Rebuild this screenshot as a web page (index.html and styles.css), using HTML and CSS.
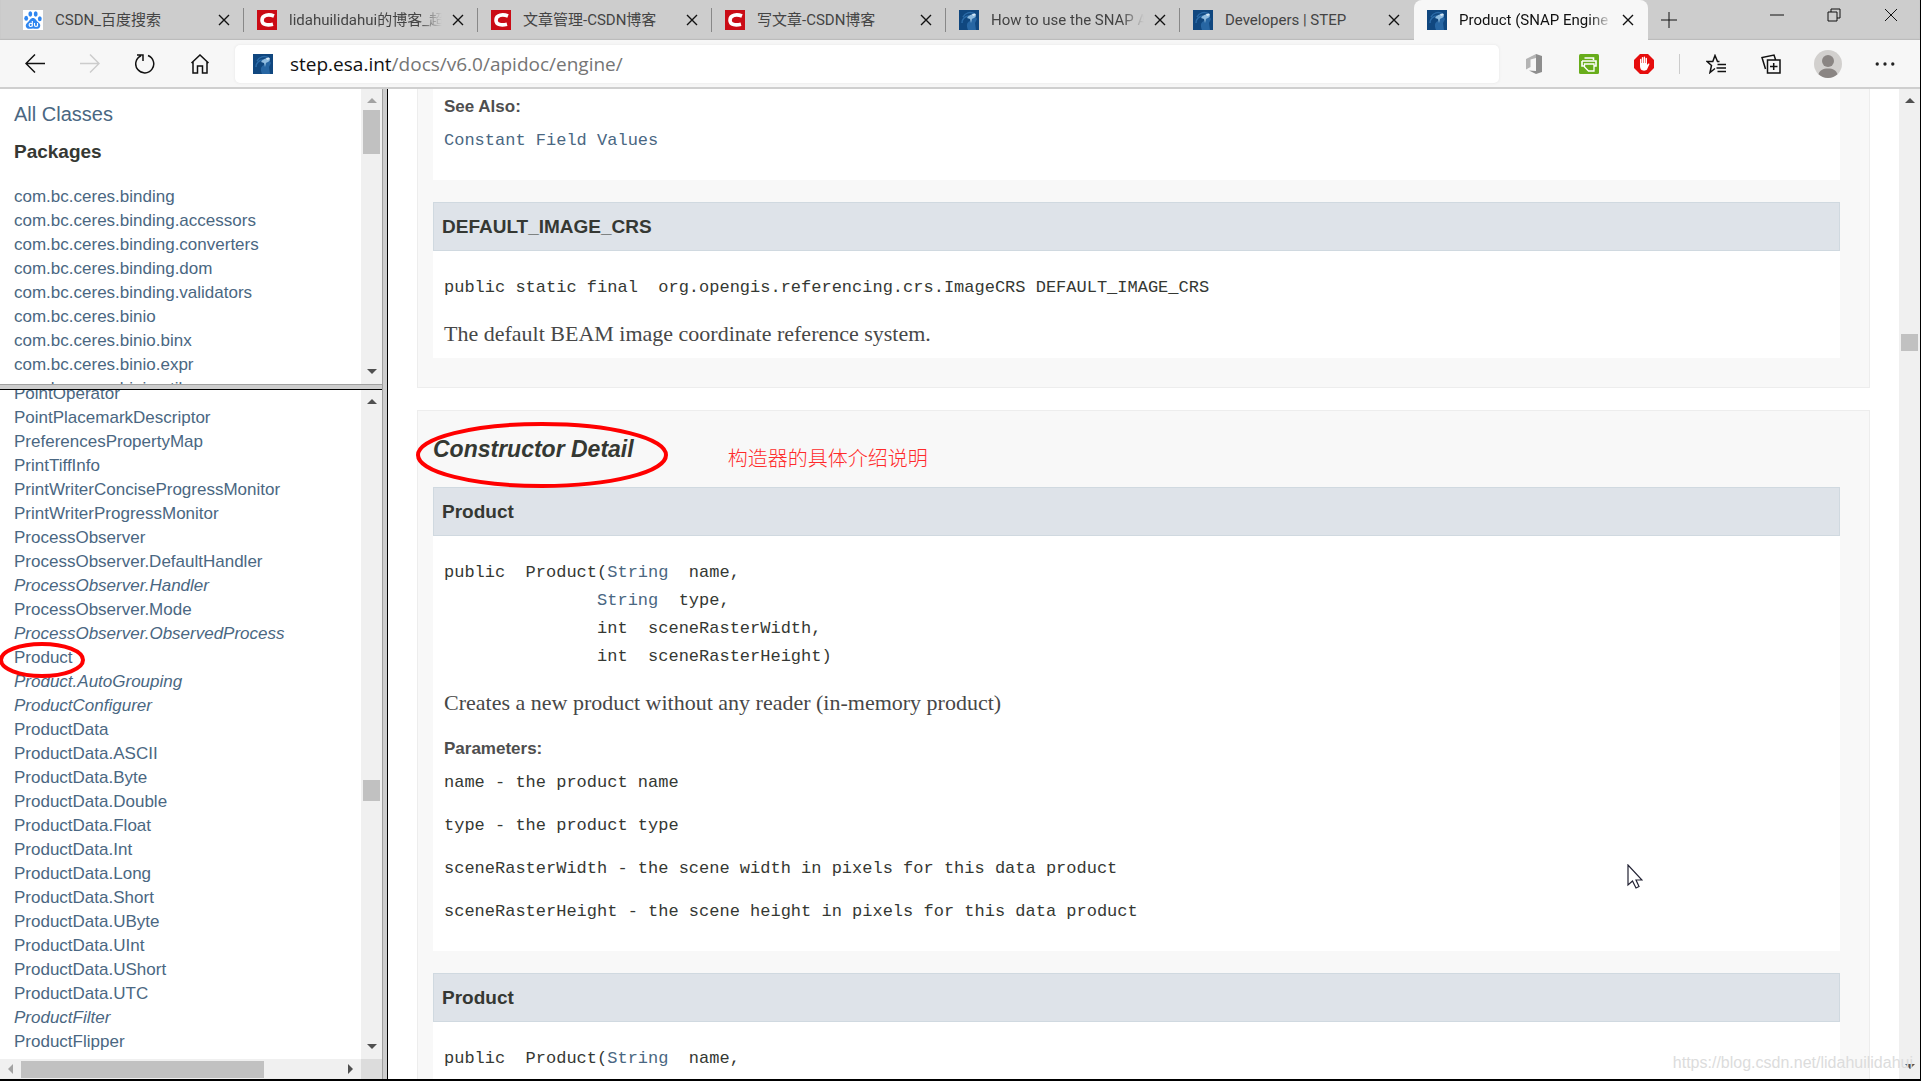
FILE: index.html
```html
<!DOCTYPE html>
<html lang="en">
<head>
    <meta charset="UTF-8">
    <meta name="viewport" content="width=device-width, initial-scale=1.0">
    <title>Product (SNAP Engine API)</title>
    <link rel="stylesheet" href="styles.css">
</head>
<body>

    <!-- shared icons -->
    <svg class="sprite" aria-hidden="true">
        <symbol id="close" viewBox="0 0 12 12"><path d="M1 1l10 10M11 1L1 11" fill="none" stroke="currentColor" stroke-width="1.4"/></symbol>
        <symbol id="baidu" viewBox="0 0 20 20">
            <rect width="20" height="20" fill="#fff"/>
            <g fill="#2f86f0">
                <ellipse cx="7.300" cy="4" rx="1.900" ry="2.700"/>
                <ellipse cx="12.700" cy="4" rx="1.900" ry="2.700"/>
                <ellipse cx="3.200" cy="8.200" rx="1.900" ry="2.500"/>
                <ellipse cx="16.800" cy="8.700" rx="1.900" ry="2.500"/>
                <path d="M10 8c2.500 0 3 2.500 5 4s2.800 3 2 5c-.8 1.800-3 2-7 1.600C6 19 3.800 18.800 3 17c-.8-2 .3-3.500 2-5s2.500-4 5-4z"/>
            </g>
            <path d="M9.300 11v5.500M9.300 14.500a1.600 1.600 0 1 0-.1 1M11.500 13v2.200c0 1.600 3 1.600 3 0V13v3.500" fill="none" stroke="#fff" stroke-width="1.100"/>
        </symbol>
        <symbol id="csdn" viewBox="0 0 20 20">
            <rect width="20" height="20" fill="#ca0c16"/>
            <path d="M17 6c-5-2-12-1.500-12 4.200 0 5 6 5.300 11 4" fill="none" stroke="#fff" stroke-width="3.600"/>
        </symbol>
        <symbol id="step" viewBox="0 0 20 20">
            <rect width="20" height="20" fill="#10477f"/>
            <path d="M9 20c-2-5-1-8 2-9l5-5 2 3-2 4 1 7z" fill="#2766a3"/>
            <path d="M4 7c2-4 7-6 12-3M3 13c0-4 3-7 7-7" fill="none" stroke="#2b6ba8" stroke-width="1.500"/>
            <path d="M8 8c2-3 4-4 8-4l1 2c-1 2-3 2-4 3l-1 4-1-4z" fill="#8fbce0"/>
            <path d="M13 4l3-.5 1 1.500-3 1z" fill="#d6e8f5"/>
        </symbol>
    </svg>

    <div class="browser">
        <div class="tabs">
            <div class="tab"><svg class="favicon"><use href="#baidu"/></svg><span class="title">CSDN_百度搜索</span><button aria-label="Close tab"><svg><use href="#close"/></svg></button></div>
            <div class="tab"><svg class="favicon"><use href="#csdn"/></svg><span class="title fade">lidahuilidahui的博客_超</span><button aria-label="Close tab"><svg><use href="#close"/></svg></button></div>
            <div class="tab"><svg class="favicon"><use href="#csdn"/></svg><span class="title">文章管理-CSDN博客</span><button aria-label="Close tab"><svg><use href="#close"/></svg></button></div>
            <div class="tab"><svg class="favicon"><use href="#csdn"/></svg><span class="title">写文章-CSDN博客</span><button aria-label="Close tab"><svg><use href="#close"/></svg></button></div>
            <div class="tab"><svg class="favicon"><use href="#step"/></svg><span class="title fade">How to use the SNAP A</span><button aria-label="Close tab"><svg><use href="#close"/></svg></button></div>
            <div class="tab"><svg class="favicon"><use href="#step"/></svg><span class="title">Developers | STEP</span><button aria-label="Close tab"><svg><use href="#close"/></svg></button></div>
            <div class="tab active"><svg class="favicon"><use href="#step"/></svg><span class="title fade">Product (SNAP Engine</span><button aria-label="Close tab"><svg><use href="#close"/></svg></button></div>
            <button class="new-tab" aria-label="New tab"><svg viewBox="0 0 16 16"><path d="M8 0v16M0 8h16"/></svg></button>
            <div class="window-buttons">
                <button aria-label="Minimize"><svg viewBox="0 0 14 14"><path d="M0 7h14"/></svg></button>
                <button aria-label="Restore"><svg viewBox="0 0 14 14"><path d="M1 4h9v9H1zM4 4V1h9v9h-3"/></svg></button>
                <button aria-label="Close"><svg viewBox="0 0 14 14"><path d="M1 1l12 12M13 1L1 13"/></svg></button>
            </div>
        </div>

        <div class="toolbar">
            <button aria-label="Back"><svg viewBox="0 0 20 20"><path d="M20 9.500H1M10 .5l-9 9 9 9"/></svg></button>
            <button aria-label="Forward" disabled><svg viewBox="0 0 20 20"><path d="M0 9.500h19M10 .5l9 9-9 9"/></svg></button>
            <button aria-label="Refresh"><svg viewBox="0 0 20 20"><path d="M13 1.500a9 9 0 1 1-7 .2M2 1h6v6"/></svg></button>
            <button aria-label="Home"><svg viewBox="0 0 20 20"><path d="M1.500 9L10 1l8.500 8M3 8v11h4.500v-7h5v7H17V8"/></svg></button>
            <div class="address">
                <svg class="favicon"><use href="#step"/></svg>
                <a href="#">step.esa.int<span>/docs/v6.0/apidoc/engine/</span></a>
            </div>
            <button aria-label="Office"><svg viewBox="0 0 20 20"><path d="M12 0l6 2v16l-6 2-7-3.500 7 .5V4z" fill="#8e8e8e" stroke="none"/><path d="M12 0v4L6.500 5.500V13L2 15.500V5z" fill="#b4b4b4" stroke="none"/></svg></button>
            <button aria-label="Print"><svg viewBox="0 0 20 20"><rect width="20" height="20" rx="1.500" fill="#68ad1b" stroke="none"/><path d="M5.500 4h9v2M3 7h14v5h-2M5.500 12H3V7" stroke="#fff" stroke-width="1.600"/><path d="M5.500 10H15v7H9.500L5.500 13z" stroke="#fff" stroke-width="1.300" fill="#68ad1b"/></svg></button>
            <button aria-label="Ad blocker"><svg viewBox="0 0 20 20"><path d="M6 0h8l6 6v8l-6 6H6l-6-6V6z" fill="#e60d0d" stroke="none"/><path d="M6 11V5.500c0-1 1.300-1 1.300 0V9h.5V3.800c0-1 1.400-1 1.400 0V9h.5V3.200c0-1 1.400-1 1.400 0V9h.5V4.500c0-1 1.400-1 1.400 0V11l1-1.200c.8-.8 1.800-.2 1.300.6L13 15.500c-.8 1.500-5 1.500-6 0-.8-1.200-1-2.500-1-4.500z" fill="#fff" stroke="none"/></svg></button>
            <span class="divider"></span>
            <button aria-label="Favorites"><svg viewBox="0 0 20 20"><path d="M13.500 7.500H11.500L9 1.500 6.800 7.500H1L5.500 11.500 4 18.500l5-4M11.500 10.500H20M10.500 14H20M11.500 17.500H20"/></svg></button>
            <button aria-label="Collections"><svg viewBox="0 0 20 20"><path d="M6.500 6h12.500v13H6.500zM12.700 9v7M9 12.500h7.500M4.500 15L1 3.500l12-2.500 1.500 4.500"/></svg></button>
            <button class="profile" aria-label="Profile"><svg class="avatar" viewBox="0 0 28 28"><circle cx="14" cy="14" r="14" fill="#d2d0ce"/><circle cx="14" cy="11" r="6" fill="#8a8583"/><path d="M4.500 24.300C5.500 20.500 9 18.500 14 18.500s8.500 2 9.500 5.800A14 14 0 0 1 14 28a14 14 0 0 1-9.500-3.700z" fill="#8a8583"/></svg></button>
            <button aria-label="Settings and more"><svg class="dots" viewBox="0 0 18 18"><circle cx="2" cy="9" r="1.500"/><circle cx="9" cy="9" r="1.500"/><circle cx="16" cy="9" r="1.500"/></svg></button>
        </div>

        <div class="frames">
            <div class="left">
                <div class="frame packages">
                    <div class="view">
                        <a class="all" href="#">All Classes</a>
                        <h2>Packages</h2>
                        <ul>
                            <li><a href="#">com.bc.ceres.binding</a></li>
                            <li><a href="#">com.bc.ceres.binding.accessors</a></li>
                            <li><a href="#">com.bc.ceres.binding.converters</a></li>
                            <li><a href="#">com.bc.ceres.binding.dom</a></li>
                            <li><a href="#">com.bc.ceres.binding.validators</a></li>
                            <li><a href="#">com.bc.ceres.binio</a></li>
                            <li><a href="#">com.bc.ceres.binio.binx</a></li>
                            <li><a href="#">com.bc.ceres.binio.expr</a></li>
                            <li><a href="#">com.bc.ceres.binio.util</a></li>
                        </ul>
                    </div>
                    <div class="scrollbar"><i class="up off"></i><b class="thumb thumb-packages"></b><i class="down"></i></div>
                </div>
                <div class="frame classes">
                    <div class="view">
                        <ul>
                            <li><a href="#">PointOperator</a></li>
                            <li><a href="#">PointPlacemarkDescriptor</a></li>
                            <li><a href="#">PreferencesPropertyMap</a></li>
                            <li><a href="#">PrintTiffInfo</a></li>
                            <li><a href="#">PrintWriterConciseProgressMonitor</a></li>
                            <li><a href="#">PrintWriterProgressMonitor</a></li>
                            <li><a href="#">ProcessObserver</a></li>
                            <li><a href="#">ProcessObserver.DefaultHandler</a></li>
                            <li><a href="#"><em>ProcessObserver.Handler</em></a></li>
                            <li><a href="#">ProcessObserver.Mode</a></li>
                            <li><a href="#"><em>ProcessObserver.ObservedProcess</em></a></li>
                            <li class="marked"><a href="#">Product</a><svg class="ring" viewBox="0 0 86 36"><ellipse cx="43" cy="18" rx="41" ry="16"/></svg></li>
                            <li><a href="#"><em>Product.AutoGrouping</em></a></li>
                            <li><a href="#"><em>ProductConfigurer</em></a></li>
                            <li><a href="#">ProductData</a></li>
                            <li><a href="#">ProductData.ASCII</a></li>
                            <li><a href="#">ProductData.Byte</a></li>
                            <li><a href="#">ProductData.Double</a></li>
                            <li><a href="#">ProductData.Float</a></li>
                            <li><a href="#">ProductData.Int</a></li>
                            <li><a href="#">ProductData.Long</a></li>
                            <li><a href="#">ProductData.Short</a></li>
                            <li><a href="#">ProductData.UByte</a></li>
                            <li><a href="#">ProductData.UInt</a></li>
                            <li><a href="#">ProductData.UShort</a></li>
                            <li><a href="#">ProductData.UTC</a></li>
                            <li><a href="#"><em>ProductFilter</em></a></li>
                            <li><a href="#">ProductFlipper</a></li>
                            <li><a href="#">ProductFlipperTask</a></li>
                        </ul>
                    </div>
                    <div class="scrollbar"><i class="up"></i><b class="thumb thumb-classes"></b><i class="down"></i></div>
                    <div class="scrollbar horizontal"><i class="prev off"></i><b class="thumb"></b><i class="next"></i></div>
                    <div class="corner"></div>
                </div>
            </div>

            <div class="frame main">
                <div class="view">
                    <section class="detail">
                        <div class="block">
                            <div class="body first">
                                <h5>See Also:</h5>
                                <p class="code"><a href="#">Constant Field Values</a></p>
                            </div>
                        </div>
                        <div class="block">
                            <h4>DEFAULT_IMAGE_CRS</h4>
                            <div class="body short">
                                <pre>public static final  org.opengis.referencing.crs.ImageCRS DEFAULT_IMAGE_CRS</pre>
                                <p class="text">The default BEAM image coordinate reference system.</p>
                            </div>
                        </div>
                    </section>

                    <section class="detail">
                        <h3><span class="marked">Constructor Detail<svg class="ring" viewBox="0 0 252 66"><ellipse cx="126" cy="33" rx="124" ry="31"/></svg></span><span class="note">构造器的具体介绍说明</span></h3>
                        <div class="block">
                            <h4>Product</h4>
                            <div class="body">
                                <pre><span>public  Product(</span><a href="#">String</a><span>  name,</span>
<span>               </span><a href="#">String</a><span>  type,</span>
<span>               int  sceneRasterWidth,</span>
<span>               int  sceneRasterHeight)</span></pre>
                                <p class="text">Creates a new product without any reader (in-memory product)</p>
                                <h5>Parameters:</h5>
                                <div class="params">
                                    <p class="code">name - the product name</p>
                                    <p class="code">type - the product type</p>
                                    <p class="code">sceneRasterWidth - the scene width in pixels for this data product</p>
                                    <p class="code">sceneRasterHeight - the scene height in pixels for this data product</p>
                                </div>
                            </div>
                        </div>
                        <div class="block">
                            <h4>Product</h4>
                            <div class="body last">
                                <pre><span>public  Product(</span><a href="#">String</a><span>  name,</span></pre>
                            </div>
                        </div>
                    </section>
                </div>
                <div class="scrollbar"><i class="up"></i><b class="thumb thumb-main"></b><i class="down"></i></div>
            </div>
        </div>

        <svg class="cursor" viewBox="0 0 16 25"><path d="M1 1v20l4.500-4 3.500 7 3-1.500-3-6.500h6z" fill="#fff" stroke="#223" stroke-width="1.200"/></svg>
        <div class="watermark">https://blog.csdn.net/lidahuilidahui</div>
    </div>

</body>
</html>
```

FILE: styles.css
```css
* {
    box-sizing: border-box;
}

body {
    margin: 0;
    background-color: #000;
    font-family: "Liberation Sans", Arial, sans-serif;
    color: #353833;
}

h2, h3, h4, h5, p, pre, ul {
    margin: 0;
    padding: 0;
}

ul {
    list-style: none;
}

a {
    color: #4a6782;
    text-decoration: none;
}

button {
    display: flex;
    align-items: center;
    justify-content: center;
    padding: 0;
    border: none;
    background: none;
    color: #111;
}

button svg {
    fill: none;
    stroke: currentColor;
}

.sprite {
    display: none;
}

.browser {
    position: relative;
    display: flex;
    flex-direction: column;
    height: 100vh;
    overflow: hidden;
    border-right: 1px solid #000;
    border-bottom: 2px solid #000;
    background-color: #fff;
}

/* tab strip */
.tabs {
    display: flex;
    flex: none;
    height: 40px;
    padding-left: 10px;
    background-color: #cdcdcd;
    box-shadow: inset 0 -1px 1px #bbb;
    font-family: Roboto, "Noto Sans CJK SC", sans-serif;
    font-size: 15px;
    line-height: 22px;
    color: #444;
}

.tab {
    position: relative;
    display: flex;
    flex: 0 1 234px;
    align-items: center;
    min-width: 0;
    padding: 0 14px 0 13px;
}

.tab::after {
    content: "";
    position: absolute;
    right: 0;
    top: 8px;
    width: 1px;
    height: 24px;
    background-color: #888;
}

.tab.active {
    border-radius: 8px 8px 0 0;
    background-color: #f7f7f7;
    color: #111;
}

.tab.active::after,
.tab:nth-child(6)::after {
    display: none;
}

.favicon {
    flex: none;
    width: 20px;
    height: 20px;
}

.title {
    flex: 1;
    margin-left: 12px;
    overflow: hidden;
    white-space: nowrap;
}

.fade {
    mask-image: linear-gradient(to right, #000 85%, transparent);
}

.tab button {
    width: 12px;
    height: 12px;
    margin-left: 10px;
}

.tab button svg {
    width: 12px;
    height: 12px;
}

.new-tab {
    width: 42px;
}

.new-tab svg {
    width: 16px;
    height: 16px;
}

.window-buttons {
    display: flex;
    height: 30px;
    margin: 0 1px 0 auto;
}

.window-buttons button {
    width: 57px;
}

.window-buttons svg {
    width: 14px;
    height: 14px;
}

/* address bar */
.toolbar {
    display: flex;
    flex: none;
    align-items: center;
    height: 49px;
    padding: 0 8px 0 7px;
    border-bottom: 2px solid #cfcfcf;
    background-color: #f7f7f7;
}

.toolbar button {
    width: 55px;
    height: 40px;
}

.toolbar .profile {
    width: 59px;
}

.toolbar button:disabled {
    color: #ccc;
}

.toolbar svg {
    width: 20px;
    height: 20px;
    stroke-width: 1.5;
}

.toolbar .avatar {
    width: 28px;
    height: 28px;
    stroke: none;
}

.toolbar .dots {
    fill: #222;
    stroke: none;
}

.address {
    display: flex;
    flex: 1;
    align-items: center;
    height: 38px;
    margin: 0 7px 0 8px;
    padding: 0 18px;
    border-radius: 5px;
    background-color: #fff;
    box-shadow: 0 0 3px #e4e4e4;
}

.address a {
    margin-left: 17px;
    font-family: "Open Sans", sans-serif;
    font-size: 19px;
    color: #111;
}

.address span {
    color: #757575;
}

.divider {
    width: 1px;
    height: 20px;
    margin: 0 8px;
    background-color: #ccc;
}

/* frameset */
.frames {
    display: grid;
    grid-template-columns: 388px 1fr;
    flex: 1;
    min-height: 0;
}

.left {
    display: grid;
    grid-template-rows: 301px 1fr;
    min-height: 0;
    padding-right: 5px;
    border-right: 1px solid #000;
    box-shadow: inset -4px 0 #cdcdcd, inset -5px 0 #a0a0a0;
}

.frame {
    display: grid;
    grid-template-columns: 1fr 21px;
    grid-template-rows: minmax(0, 1fr) auto;
    min-height: 0;
}

.view {
    min-height: 0;
    overflow: hidden;
}

.packages {
    padding-bottom: 5px;
    border-bottom: 1px solid #000;
    box-shadow: inset 0 -4px #cdcdcd, inset 0 -5px #a0a0a0;
}

.packages .view {
    padding: 13px 14px 0;
}

.all {
    display: block;
    font-size: 20px;
    line-height: 24px;
}

.packages h2 {
    margin: 14px 0 21px;
    font-size: 19px;
    line-height: 24px;
}

.frame li {
    font-size: 17px;
    line-height: 24px;
    white-space: nowrap;
}

.classes .view {
    padding-left: 14px;
}

.classes ul {
    margin-top: -8px;
}

/* scrollbars */
.scrollbar {
    display: flex;
    flex-direction: column;
    align-items: center;
    min-height: 0;
    padding: 9px 0 10px;
    background-color: #f0f0f0;
}

.thumb {
    width: 17px;
    background-color: #c1c1c1;
}

.thumb-packages {
    height: 44px;
    margin-top: 7px;
}

.thumb-classes {
    height: 21px;
    margin-top: 376px;
}

.thumb-main {
    height: 17px;
    margin-top: 231px;
}

.up, .down {
    border: 5px solid transparent;
}

.up {
    border-top: none;
    border-bottom-color: #505050;
}

.down {
    margin-top: auto;
    border-bottom: none;
    border-top-color: #505050;
}

.up.off {
    border-bottom-color: #a3a3a3;
}

.horizontal {
    flex-direction: row;
    height: 20px;
    padding: 0 8px;
}

.horizontal .thumb {
    width: 243px;
    height: 17px;
    margin-left: 8px;
}

.prev, .next {
    border: 5px solid transparent;
}

.prev {
    border-left: none;
    border-right-color: #a3a3a3;
}

.next {
    margin-left: auto;
    border-right: none;
    border-left-color: #505050;
}

.corner {
    background-color: #dcdcdc;
}

/* javadoc page */
.main .view {
    padding: 0 29px;
}

.detail {
    margin-bottom: 22px;
    padding: 24px 29px 29px 15px;
    border: 1px solid #ededed;
    background-color: #f8f8f8;
}

.detail:first-child {
    padding-top: 0;
    border-top: none;
}

.detail h3 {
    display: flex;
    align-items: center;
    margin-bottom: 24px;
    font-size: 23px;
    font-style: italic;
    line-height: 28px;
}

.note {
    margin: 18px 0 0 94px;
    font-family: "Noto Sans CJK SC", sans-serif;
    font-size: 20px;
    font-style: normal;
    font-weight: 300;
    line-height: 10px;
    color: #ff2a2a;
}

.block + .block {
    margin-top: 22px;
}

.detail h4 {
    padding: 10px 8px 9px;
    border: 1px solid #d0d9e0;
    background-color: #dee3e9;
    font-size: 19px;
    line-height: 28px;
}

.body {
    padding: 23px 11px 25px;
    background-color: #fff;
}

.body.first {
    padding-top: 4px;
}

.body.short {
    padding-bottom: 10px;
}

.body.last {
    padding-bottom: 80px;
}

.body h5 {
    margin-bottom: 6px;
    font-size: 17px;
    line-height: 28px;
    color: #4e4e4e;
}

.body pre,
.code {
    font-family: "Liberation Mono", monospace;
    font-size: 17px;
    line-height: 28px;
}

.text {
    margin-top: 18px;
    font-family: "Liberation Serif", Georgia, serif;
    font-size: 22px;
    line-height: 28px;
    color: #474747;
}

.text + h5 {
    margin-top: 18px;
}

.params {
    display: grid;
    gap: 15px;
}

/* hand-drawn marks over the page */
.marked {
    position: relative;
}

.ring {
    position: absolute;
    fill: none;
    stroke: #f00;
    stroke-width: 4;
}

.detail .ring {
    left: -17px;
    top: -13px;
    width: 252px;
    height: 66px;
}

.frame li .ring {
    left: -15px;
    top: -4px;
    width: 86px;
    height: 36px;
}

.cursor {
    position: absolute;
    left: 1627px;
    top: 864px;
    width: 16px;
    height: 25px;
}

.watermark {
    position: absolute;
    right: 7px;
    bottom: 4px;
    font-size: 16px;
    line-height: 24px;
    color: #dcdcdc;
}
```
